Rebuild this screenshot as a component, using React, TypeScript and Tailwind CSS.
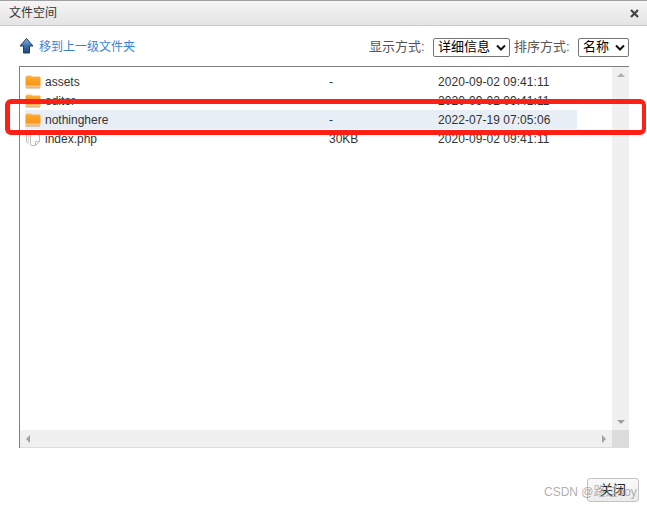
const FONT = "font-['Liberation_Sans','Noto_Sans_CJK_SC',sans-serif]";

const ROWS = [
  { name: "assets", size: "-", date: "2020-09-02 09:41:11", kind: "folder" },
  { name: "editor", size: "", date: "2020-09-02 09:41:11", kind: "folder" },
  { name: "nothinghere", size: "-", date: "2022-07-19 07:05:06", kind: "folder", active: true },
  { name: "index.php", size: "30KB", date: "2020-09-02 09:41:11", kind: "file" },
];

function FolderIcon({ id }: { id: string }) {
  return (
    <svg width="16" height="14" viewBox="0 0 16 14" className="shrink-0">
      <defs>
        <linearGradient id={id} x1="0" y1="0" x2="0" y2="1">
          <stop offset="0" stopColor="#fbc062" />
          <stop offset="0.2" stopColor="#fba52a" />
          <stop offset="0.7" stopColor="#f8981c" />
          <stop offset="0.85" stopColor="#fcc98a" />
          <stop offset="1" stopColor="#c9a57a" />
        </linearGradient>
      </defs>
      <path d="M1 1.5 Q1 .5 2 .5 H6 L7 1.5 H14.5 Q15.5 1.5 15.5 2.5 V12.5 Q15.5 13.5 14.5 13.5 H1.5 Q.5 13.5 .5 12.5 V2 Z" fill={`url(#${id})`} />
    </svg>
  );
}

function FileIcon() {
  return (
    <svg width="16" height="16" viewBox="0 0 16 16" className="shrink-0" fill="none" stroke="#bdbdbd">
      <path d="M1.5 3 V10 Q1.5 12 3.5 12" />
      <path d="M3.5 1.5 V11" stroke="#d8d8d8" />
      <path d="M5.5 1.5 H14.5 V10.5 L10.5 14.5 H7 Q5.5 14.5 5.5 13 Z" fill="#fff" />
      <path d="M10.5 14.5 V10.5 H14.5" />
    </svg>
  );
}

function UpIcon() {
  return (
    <svg width="15" height="16" viewBox="0 0 15 16" className="mt-[-2px]">
      <defs>
        <linearGradient id="up" x1="0" y1="0" x2="0" y2="1">
          <stop offset="0" stopColor="#8db4dc" />
          <stop offset="0.5" stopColor="#3f72ad" />
          <stop offset="1" stopColor="#1f4674" />
        </linearGradient>
      </defs>
      <path d="M7.5 .5 L14 8 H10.5 V15 H4.5 V8 H1 Z" fill="url(#up)" stroke="#1d3d63" strokeWidth="1" />
    </svg>
  );
}

function Chevron() {
  return (
    <svg width="10" height="7" viewBox="0 0 10 7" fill="none" stroke="#111" strokeWidth="2" className="shrink-0">
      <path d="M1 1.5 L5 5.5 L9 1.5" />
    </svg>
  );
}

export default function App() {
  return (
    <div className={`relative flex h-[507px] w-[647px] flex-col overflow-hidden bg-white text-[12px] text-[#333] ${FONT}`}>
      <div className="flex h-[26px] shrink-0 items-center justify-between border-t border-b border-t-[#a0a0a0] border-b-[#c8c8c8] bg-gradient-to-b from-[#f5f5f5] to-[#e4e4e4] pl-[9px] pr-[8px]">
        <span className="text-[#333]">文件空间</span>
        <svg width="9" height="9" viewBox="0 0 9 9" stroke="#444" strokeWidth="2.2">
          <path d="M1 1 L8 8 M8 1 L1 8" />
        </svg>
      </div>

      <div className="flex h-[40px] shrink-0 items-center justify-between pl-[19px] pr-[18px] pt-[2px]">
        <div className="flex items-center gap-[5px]">
          <UpIcon />
          <a className="text-[#3b7fd6]">移到上一级文件夹</a>
        </div>
        <div className="flex items-center">
          <span className="w-[64px] text-[13px] text-[#555]">显示方式:</span>
          <div className="mr-[4px] flex h-[19px] w-[77px] items-center justify-between rounded-[2px] border border-[#767676] pl-[4px] pr-[3px] text-[13px] text-black">
            详细信息
            <Chevron />
          </div>
          <span className="w-[64px] text-[13px] text-[#555]">排序方式:</span>
          <div className="flex h-[19px] w-[51px] items-center justify-between rounded-[2px] border border-[#767676] pl-[4px] pr-[3px] text-[13px] text-black">
            名称
            <Chevron />
          </div>
        </div>
      </div>

      <div className="ml-[19px] flex h-[382px] w-[610px] shrink-0 flex-col border-t border-l border-[#808080]">
        <div className="flex min-h-0 flex-1">
          <div className="flex-1 pl-[5px] pr-[35px] pt-[5px]">
            {ROWS.map((row) => (
              <div
                key={row.name}
                className={`flex h-[19px] items-center ${row.active ? "bg-[#e8eef5]" : ""}`}
              >
                <div className="flex w-[304px] items-center gap-[4px]">
                  {row.kind === "folder" ? <FolderIcon id={`folder-${row.name}`} /> : <FileIcon />}
                  <span>{row.name}</span>
                </div>
                <div className="w-[109px]">{row.size}</div>
                <div className="tracking-[0.05px]">{row.date}</div>
              </div>
            ))}
          </div>
          <div className="flex w-[17px] flex-col items-center justify-between bg-[#f0f0f0] py-[6px]">
            <div className="h-0 w-0 border-x-[4px] border-b-[4px] border-x-transparent border-b-[#b0b0b0]" />
            <div className="h-0 w-0 border-x-[4px] border-t-[4px] border-x-transparent border-t-[#a0a0a0]" />
          </div>
        </div>
        <div className="flex h-[18px] shrink-0 border-b border-b-[#dcdcdc] bg-[#f0f0f0]">
          <div className="flex flex-1 items-center justify-between px-[6px]">
            <div className="h-0 w-0 border-y-[4px] border-r-[4px] border-y-transparent border-r-[#a0a0a0]" />
            <div className="h-0 w-0 border-y-[4px] border-l-[4px] border-y-transparent border-l-[#a0a0a0]" />
          </div>
          <div className="w-[17px] bg-[#dcdcdc]" />
        </div>
      </div>

      <div className="mt-[30px] flex justify-end pr-[8px]">
        <div className="flex h-[24px] w-[52px] items-center justify-center rounded-[3px] border border-[#c4c4c4] bg-gradient-to-b from-[#fafafa] to-[#ececec] text-[13px] text-[#222]">
          关闭
        </div>
      </div>

      <span className="absolute left-[544px] top-[483px] text-[12px] text-[#9a9a9a]/80">CSDN @路过boy</span>
      <div className="pointer-events-none absolute left-[5px] top-[99px] h-[36px] w-[641px] rounded-[6px] border-y-[5px] border-l-[5px] border-r-[4px] border-[#ff2015]" />
    </div>
  );
}
